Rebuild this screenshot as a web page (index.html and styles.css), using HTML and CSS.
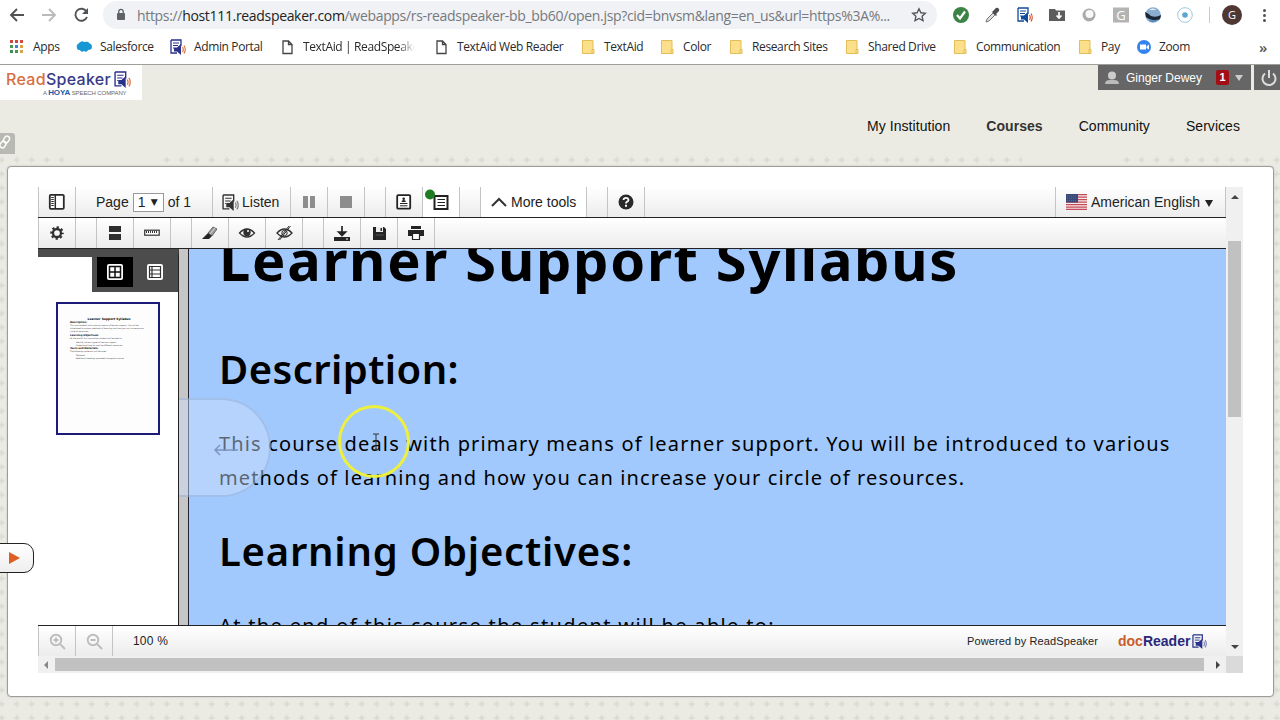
FILE: index.html
```html
<!DOCTYPE html>
<html lang="en">
<head>
<meta charset="utf-8">
<title>ReadSpeaker docReader</title>
<link rel="stylesheet" href="styles.css">
</head>
<body>
<svg class="defs" width="0" height="0">
  <defs>
    <pattern id="plus" x="9.200" y="0" width="15" height="13.950" patternUnits="userSpaceOnUse"><path d="M7.500 3l1.300 2.700L11.500 7 8.800 8.300 7.500 11 6.200 8.300 3.500 7l2.700-1.300z" fill="#dcdcd4"/></pattern>
    <symbol id="folder" viewBox="0 0 16 16"><path d="M.5 1.500h10.500v9h1v4H.5z" fill="#fcdf8a" stroke="#e3bd58"/><path d="M10 14.500v-4h1" fill="none" stroke="#e3bd58"/></symbol>
    <symbol id="file" viewBox="0 0 16 16"><path d="M1 2h5.500l3.500 3.500v9H1zM6.500 2v3.500H10" fill="#fff" stroke="#444" stroke-width="1.300"/></symbol>
    <symbol id="reader" viewBox="0 0 16 16"><path d="M1 1h10v6M1 1v13h6" fill="none" stroke="currentColor" stroke-width="1.300"/><path d="M3 4h6M3 6.500h5M3 9h1" stroke="currentColor"/><path d="M4 8.500h3L11 5v11l-4-3.500H4z" fill="currentColor"/><path d="M12.500 8q1.500 2.500 0 5M14 6.500q2.500 4 0 8" fill="none" stroke="var(--wave,#d96a35)" stroke-width="1.100"/></symbol>
  </defs>
</svg>
<header class="browser">
  <div class="address-row">
    <svg class="nav-ico" width="100" height="30" viewBox="0 0 100 30" fill="none" stroke-width="1.900"><path d="M24 15H11M17 9l-6 6 6 6" stroke="#505356"/><path d="M42 15h13M49 9l6 6-6 6" stroke="#b9bbbd"/><path d="M86.500 11.500A6 6 0 1 0 87 17" stroke="#505356"/><path d="M88 8v6h-6z" fill="#505356"/></svg>
    <div class="omnibox">
      <svg width="10" height="14" viewBox="0 0 10 14"><rect x="1" y="5" width="8" height="7" rx="1" fill="#5f6368"/><path d="M2.800 5V3.500a2.200 2.200 0 0 1 4.400 0V5" fill="none" stroke="#5f6368" stroke-width="1.300"/></svg>
      <span class="url">https://<b>host111.readspeaker.com</b>/webapps/rs-readspeaker-bb_bb60/open.jsp?cid=bnvsm&amp;lang=en_us&amp;url=https%3A%...</span>
      <svg class="star" width="16" height="16" viewBox="0 0 16 16"><path d="M8 1.800l1.900 4 4.400.5-3.200 3 .9 4.400L8 11.500l-4 2.200.900-4.400-3.200-3 4.400-.5z" fill="none" stroke="#55585c" stroke-width="1.400"/></svg>
    </div>
    <div class="extensions">
      <svg viewBox="0 0 16 16"><circle cx="8" cy="8" r="8" fill="#3c8445"/><path d="M4 8l3 3.500 5-7" fill="none" stroke="#fff" stroke-width="2.200"/></svg>
      <svg viewBox="0 0 16 16"><path d="M1 15l1-3 6-6 2 2-6 6z" fill="#ddd" stroke="#777"/><path d="M7 5l4 4 1-1-1-1 3-3q1-2-1-3-2-1-3 1L8 4z" fill="#4b4d50"/></svg>
      <svg class="rs-ext" viewBox="0 0 16 16"><use href="#reader"/></svg>
      <svg viewBox="0 0 16 16"><path d="M0 2h6l1 1.500h9V14H0z" fill="#5d5d5d"/><path d="M10 5v5M7.500 8.500L10 11l2.500-2.500" fill="none" stroke="#fff" stroke-width="1.700"/></svg>
      <svg viewBox="0 0 16 16"><circle cx="8" cy="8" r="6.500" fill="#aaa"/><circle cx="8.500" cy="7" r="4" fill="#f8f8f8"/></svg>
      <svg viewBox="0 0 16 16"><rect width="16" height="15" y=".5" fill="#b4b4b4"/><text x="8" y="12.500" text-anchor="middle" class="g-letter">G</text></svg>
      <svg viewBox="0 0 16 16"><circle cx="8" cy="8" r="7.800" fill="#8baed0"/><path d="M0 5q3 1 6 4 5 2 10-1 0 3-2 5-8 1-13-3z" fill="#1b2533"/><path d="M3 13q6 1 11-1-5 6-11 1z" fill="#5289bd"/><path d="M4 3q4-3 7 0z" fill="#e9f1f6"/></svg>
      <svg viewBox="0 0 16 16"><circle cx="8" cy="8" r="7.300" fill="#fff" stroke="#9dcbe0"/><circle cx="8" cy="8" r="2.800" fill="#5aa8cf"/></svg>
    </div>
    <i class="divider"></i>
    <span class="avatar">G</span>
    <span class="kebab"><i></i><i></i><i></i></span>
  </div>
  <nav class="bookmarks">
    <a class="apps"><svg width="16" height="16" viewBox="0 0 16 16"><path d="M0 1h3v3H0zM5 1h3v3H5zM10 1h3v3h-3z" fill="#cf4a3c"/><path d="M0 6h3v3H0z" fill="#4a9b58"/><path d="M5 6h3v3H5z" fill="#3f7fd0"/><path d="M10 6h3v3h-3z" fill="#d9a243"/><path d="M0 11h3v3H0z" fill="#3f8d4c"/><path d="M5 11h3v3H5z" fill="#449455"/><path d="M10 11h3v3h-3z" fill="#d9a243"/></svg><span>Apps</span></a>
    <a class="far"><svg width="16" height="16" viewBox="0 0 16 16"><path d="M3 4q3-3 5-1 5-1 5 1 3 1 3 4 0 3-4 3-1 3-4 1-3 2-4-1-3 0-3-2-1-3 1-4z" fill="#1798d5"/></svg><span>Salesforce</span></a>
    <a class="far"><svg class="rs" width="16" height="16"><use href="#reader"/></svg><span>Admin Portal</span></a>
    <a class="near"><svg width="16" height="16"><use href="#file"/></svg><span class="fade">TextAid | ReadSpeaker</span></a>
    <a class="near"><svg width="16" height="16"><use href="#file"/></svg><span>TextAid Web Reader</span></a>
    <a><svg width="16" height="16"><use href="#folder"/></svg><span>TextAid</span></a>
    <a><svg width="16" height="16"><use href="#folder"/></svg><span>Color</span></a>
    <a><svg width="16" height="16"><use href="#folder"/></svg><span>Research Sites</span></a>
    <a><svg width="16" height="16"><use href="#folder"/></svg><span>Shared Drive</span></a>
    <a><svg width="16" height="16"><use href="#folder"/></svg><span>Communication</span></a>
    <a><svg width="16" height="16"><use href="#folder"/></svg><span>Pay</span></a>
    <a><svg width="16" height="16" viewBox="0 0 16 16"><circle cx="7" cy="8" r="7" fill="#3384ee"/><path d="M3 5.500h6v5H3zM9.500 7.500L12 5.500v5L9.500 9z" fill="#fff"/></svg><span>Zoom</span></a>
    <span class="more">»</span>
  </nav>
</header>

<main class="page">
  <svg class="texture"><rect width="66" height="14" fill="url(#plus)"/><rect x="160" width="862" height="14" fill="url(#plus)"/><rect x="1115" width="165" height="14" fill="url(#plus)"/><rect y="14" width="100%" height="553" fill="url(#plus)"/></svg>
  <div class="masthead">
    <div class="brand">
      <div class="brand-name"><span><em>Read</em>Speaker</span><svg class="rs" width="17" height="17"><use href="#reader"/></svg></div>
      <div class="brand-sub">A <b>HOYA</b> SPEECH COMPANY</div>
    </div>
    <div class="account">
      <div class="user"><svg width="14" height="14" viewBox="0 0 14 14"><circle cx="7" cy="4.500" r="4" fill="#ccc"/><path d="M0 13q0-4 5-4h4q5 0 5 4z" fill="#bbb"/></svg><span>Ginger Dewey</span><b class="count">1</b><i class="caret"></i></div>
      <div class="power"><svg width="18" height="18" viewBox="0 0 18 18" fill="none" stroke="#ddd" stroke-width="2"><path d="M5 4.500a6.500 6.500 0 1 0 8 0M9 1v8"/></svg></div>
    </div>
    <nav class="tabs"><a>My Institution</a><a class="on">Courses</a><a>Community</a><a>Services</a></nav>
    <div class="permalink"><svg width="14" height="16" viewBox="0 0 14 16" fill="none" stroke="#fff" stroke-width="1.400"><rect x="4" y="2" width="5" height="7" rx="2.500" transform="rotate(35 6.500 5.500)"/><rect x=".5" y="7" width="5" height="7" rx="2.500" transform="rotate(35 3 10.500)"/></svg></div>
  </div>

  <section class="panel">
    <div class="reader">
      <div class="app">
        <div class="bar top">
          <div class="c37"><svg width="18" height="18" viewBox="0 0 18 18"><rect x="1.800" y="1.800" width="14" height="14" rx="1" fill="#fff" stroke="#2b2b2b" stroke-width="1.800"/><path d="M7.300 2v14" stroke="#2b2b2b" stroke-width="1.500"/><path d="M4.500 4v10" stroke="#2b2b2b" stroke-width="2.500" stroke-dasharray="1 1"/></svg></div>
          <div class="pager"><span>Page</span><span class="select">1<i>▼</i></span><span>of 1</span></div>
          <div class="listen"><svg class="dark" width="17" height="17"><use href="#reader"/></svg><span>Listen</span></div>
          <div class="c37"><svg width="14" height="14"><path d="M1 1h5v12H1zM8 1h5v12H8z" fill="#8d8d8d"/></svg></div>
          <div class="c37"><svg width="14" height="14"><path d="M1 1h12v12H1z" fill="#8d8d8d"/></svg></div>
          <div class="c21"></div>
          <div class="c37"><svg width="16" height="16" viewBox="0 0 16 16"><rect x="1.200" y="1.200" width="13" height="13.500" rx="1" fill="#fff" stroke="#222" stroke-width="1.800"/><circle cx="7.700" cy="4.700" r="1.300" fill="#222"/><path d="M5.500 8q0-2 2.200-2t2.200 2z" fill="#222"/><path d="M4 9.500h7.500M4 11.800h7.500" stroke="#222"/></svg></div>
          <div class="c37 active"><svg width="24" height="22" viewBox="0 0 24 22"><rect x="5.500" y="5" width="13" height="13" fill="#fff" stroke="#222" stroke-width="2"/><path d="M8.500 8.500h7.500M8.500 11.500h7.500M8.500 14.500h7.500" stroke="#222"/><circle cx="1" cy="3.500" r="5" fill="#207c22"/></svg></div>
          <div class="c21"></div>
          <div class="moretools"><svg width="16" height="10"><path d="M1 9l7-7 7 7" fill="none" stroke="#333" stroke-width="2"/></svg><span>More tools</span></div>
          <div class="c21"></div>
          <div class="c37"><svg width="16" height="16"><circle cx="8" cy="8" r="7.500" fill="#2a2a2a"/><path d="M5.500 6q.2-2.200 2.500-2.200T10.500 6Q10.500 7 9 7.800 8 8.400 8 9.500" fill="none" stroke="#fff" stroke-width="1.800"/><path d="M7 10.800h2v1.900H7z" fill="#fff"/></svg></div>
          <div class="fill"></div>
          <div class="lang"><svg width="21" height="16" viewBox="0 0 21 16"><path fill="#f4eaea" d="M0 0h21v16H0z"/><path d="M0 .6h21M0 3.100h21M0 5.600h21M0 8.100h21M0 10.600h21M0 13.100h21M0 15.400h21" stroke="#c64b59" stroke-width="1.200"/><path fill="#3a4977" d="M0 0h12v8.500H0z"/><path d="M1 2h10M1 4.200h10M1 6.500h10" stroke="#66749b" stroke-width=".7" stroke-dasharray="1 1"/></svg><span>American English</span><i></i></div>
        </div>
        <div class="bar second">
          <div class="c37"><svg width="14" height="14" viewBox="0 0 14 14"><circle cx="7" cy="7" r="4" fill="none" stroke="#303030" stroke-width="2.300"/><circle cx="7" cy="7" r="5.800" fill="none" stroke="#303030" stroke-width="2" stroke-dasharray="2.300 2.255" stroke-dashoffset="1.100"/></svg></div>
          <div class="c21"></div>
          <div class="c37"><svg width="12" height="14"><path d="M0 0h12v6H0zM0 8h12v6H0z" fill="#2e2e2e"/></svg></div>
          <div class="c37"><svg width="16" height="8"><rect x=".7" y="1.200" width="14.500" height="5" fill="#fff" stroke="#333" stroke-width="1.200"/><path d="M2 3h12" stroke="#333" stroke-width="2" stroke-dasharray="1 1"/></svg></div>
          <div class="c21"></div>
          <div class="c37"><svg width="16" height="14" viewBox="0 0 16 14"><path d="M6 7l5-6 4 2-5 7z" fill="#999" stroke="#444" stroke-width=".7"/><path d="M8 8l5-6" stroke="#ddd"/><path d="M0 13l6-6 4 3-3 3H3z" fill="#262626"/></svg></div>
          <div class="c37"><svg width="16" height="12" viewBox="0 0 16 12"><path d="M.5 6Q8-2 15.500 6 8 14 .5 6z" fill="#fff" stroke="#303030" stroke-width="1.300"/><circle cx="8" cy="5.500" r="3.700" fill="#303030"/><circle cx="9" cy="4" r="1" fill="#fff"/></svg></div>
          <div class="c37"><svg width="17" height="14" viewBox="0 0 17 14"><path d="M1 7Q8.500-1 16 7 8.500 15 1 7z" fill="none" stroke="#303030" stroke-width="1.300"/><circle cx="8.500" cy="7" r="2.700" fill="none" stroke="#303030"/><path d="M14.500 0L3.500 14M13 0L2 14" stroke="#303030"/></svg></div>
          <div class="c21"></div>
          <div class="c37"><svg width="16" height="15"><path d="M8 0v8M4.500 6L8 9.500 11.500 6z" stroke="#242424" stroke-width="1.700" fill="#242424"/><path d="M0 11h16v4H0z" fill="#242424"/><path d="M12 13h2" stroke="#fff"/></svg></div>
          <div class="c37"><svg width="13" height="13"><path d="M0 0h11l2 2v11H0z" fill="#242424"/><path d="M3 0h7v5H3z" fill="#eee"/><path d="M7.500 1h1.500v3H7.500z" fill="#242424"/><path d="M2.500 8h8" stroke="#555"/></svg></div>
          <div class="c37"><svg width="16" height="14"><path d="M3 0h10v3H3zM0 4h16v6H0z" fill="#242424"/><path d="M4.500 7.500h7v6h-7z" fill="#fff" stroke="#242424" stroke-width="1.200"/></svg></div>
          <div class="fill"></div>
        </div>
        <div class="work">
          <aside class="side">
            <div class="side-tabs">
              <div class="sel"><svg width="16" height="16"><rect width="16" height="16" rx="2" fill="#fff"/><path d="M2.500 2.500h11v11h-11zM8 2v12M2 8h12" fill="none" stroke="#111" stroke-width="1.500"/></svg></div>
              <div><svg width="16" height="16"><rect width="16" height="16" rx="2" fill="#fff"/><path d="M2.500 2.500h11v11h-11zM2 6h12M2 10h12M5 2v12" fill="none" stroke="#333" stroke-width="1.200"/></svg></div>
            </div>
            <div class="thumb">
              <h6>Learner Support Syllabus</h6>
              <b>Description:</b><p>This course deals with primary means of learner support. You will be introduced to various methods of learning and how you can increase your circle of resources.</p>
              <b>Learning Objectives:</b><p>At the end of this course the student will be able to:</p>
              <p class="in">Identify various types of learner support</p><p class="in">Understand how to use the different resources</p>
              <b>Texts and Materials:</b><p>The following materials will be used:</p>
              <p class="in">Textbook</p><p class="in">Additional readings provided throughout course</p>
            </div>
          </aside>
          <div class="gutter"></div>
          <article class="doc">
            <h1><span class="t1">Learner Support Syllabus</span></h1>
            <h2 class="h-desc"><span class="t2">Description:</span></h2>
            <p><span class="l1">This course deals with primary means of learner support. You will be introduced to various</span><br><span class="l2">methods of learning and how you can increase your circle of resources.</span></p>
            <h2 class="h-obj"><span class="t3">Learning Objectives:</span></h2>
            <p class="last"><span class="l3">At the end of this course the student will be able to:</span></p>
            <div class="halo"><svg width="8" height="18"><path d="M1 1h2.500q.5 0 .5 1 0-1 .5-1H7M4 2v13M1 16.500h2.500Q4 16 4 15q0 1.500.500 1.500H7" fill="none" stroke="#333"/></svg></div>
          </article>
          <div class="back"><svg width="26" height="12"><path d="M25 6H2M7 1L2 6l5 5" fill="none" stroke="#7994bd" stroke-width="1.400"/></svg></div>
        </div>
        <div class="bar foot">
          <div class="c37"><svg width="17" height="17" fill="none" stroke="#bdbdbd" stroke-width="1.900"><circle cx="7" cy="7" r="5.300"/><path d="M11 11l5 5M4.500 7h5M7 4.500v5"/></svg></div>
          <div class="c37"><svg width="17" height="17" fill="none" stroke="#bdbdbd" stroke-width="1.900"><circle cx="7" cy="7" r="5.300"/><path d="M11 11l5 5M4.500 7h5"/></svg></div>
          <div class="zoomlevel"><span>100 %</span></div>
          <div class="powered"><span>Powered by ReadSpeaker</span></div>
          <div class="product"><span><em>doc</em>Reader</span><svg class="rs" width="15" height="15"><use href="#reader"/></svg></div>
        </div>
      </div>
      <div class="vscroll"><i class="up"></i><div class="vthumb"></div><i class="down"></i></div>
      <div class="hscroll"><i class="left"></i><div class="hthumb"></div><i class="right"></i></div>
      <div class="corner"></div>
    </div>
  </section>
  <div class="drawer"><i></i></div>
</main>
</body>
</html>
```
FILE: styles.css
```css
* { box-sizing: border-box; }
body { margin: 0; width: 1280px; height: 720px; overflow: hidden; background: #ebebe3; font-family: "Liberation Sans", Arial, sans-serif; color: #111; }
svg { display: block; flex: none; overflow: visible; }
.defs { position: absolute; }
em { font-style: normal; }
.rs { color: #29318a; }
.rs-ext { color: #124a9c; --wave: #d2492a; }
.dark { color: #333; --wave: #777; }

.browser { height: 65px; background: #fff; border-bottom: 1px solid #a09f9a; font-family: "Open Sans", "Noto Sans", sans-serif; }
.address-row { height: 30px; display: flex; align-items: center; }
.nav-ico { margin-right: 3px; }
.omnibox { width: 834px; height: 28px; border-radius: 14px; background: #f0f2f5; display: flex; align-items: center; padding: 0 10px 0 13px; flex: none; }
.url { margin-left: 11px; font-size: 14px; letter-spacing: -.325px; color: #76797d; white-space: nowrap; flex: 1; }
.url b { font-weight: 400; color: #222; }
.extensions { display: flex; margin-left: 8px; }
.extensions svg { width: 16px; height: 16px; margin: 0 8px; }
.g-letter { font-size: 13px; fill: #fff; }
.divider { width: 1px; height: 16px; background: #c8cacc; margin-left: 8px; }
.avatar { width: 20px; height: 20px; border-radius: 50%; background: #4f3833; color: #fff; font-size: 11px; line-height: 20px; text-align: center; margin-left: 12px; }
.kebab { display: grid; gap: 2px; margin-left: 21px; }
.kebab i { width: 3px; height: 3px; border-radius: 50%; background: #505356; }
.bookmarks { height: 33px; padding-left: 10px; display: grid; grid-template-columns: 66px 94px 112px 154px 146px 79px 69px 116px 108px 125px 58px 122px auto; align-items: center; font-size: 12px; letter-spacing: -.37px; color: #2a2a2a; white-space: nowrap; }
.bookmarks a { display: flex; align-items: center; gap: 6px; }
.bookmarks .apps { gap: 7px; }
.bookmarks .near { gap: 5px; }
.bookmarks .far { gap: 8px; }
.fade { width: 112px; overflow: hidden; mask-image: linear-gradient(90deg, #000 85%, transparent); }
.more { font-size: 15px; font-weight: 600; color: #555; }

.page { position: relative; height: 655px; }
.texture { position: absolute; inset: 88px 0 0; width: 100%; height: 567px; }
.masthead { height: 102px; position: relative; }
.brand { position: absolute; left: 0; top: 0; width: 142px; height: 35px; background: #fff; padding: 4px 0 0 6px; }
.brand-name { display: flex; align-items: center; gap: 3px; height: 20px; font: 500 16px Inter, sans-serif; letter-spacing: .3px; color: #363a87; }
.brand-name em { color: #d6703f; }
.brand-sub { font-size: 6px; line-height: 8px; letter-spacing: -.1px; color: #666; padding-left: 37px; white-space: nowrap; }
.brand-sub b { font-size: 8px; color: #1c5ca8; }
.account { display: flex; gap: 3px; justify-content: flex-end; height: 25px; font-size: 12px; color: #fff; }
.user { width: 153px; background: #666; display: flex; align-items: center; padding-left: 7px; }
.user span { margin-left: 7px; width: 90px; white-space: nowrap; }
.count { width: 13px; height: 15px; background: #a30d14; border-radius: 2px; font-size: 11px; line-height: 15px; text-align: center; }
.caret { border: 4.500px solid transparent; border-top: 6px solid #ccc; border-bottom: 0; margin-left: 6px; }
.power { width: 26px; background: #666; display: flex; align-items: center; padding-left: 6px; }
.tabs { display: flex; justify-content: flex-end; gap: 36px; padding: 28px 40px 0 0; font-size: 14px; line-height: 16px; letter-spacing: .05px; }
.tabs .on { font-weight: 700; color: #333; }
.permalink { position: absolute; left: 0; top: 68px; width: 15px; height: 21px; background: #b9b9b4; border-radius: 0 3px 0 0; padding: 1px 0; }

.panel { position: relative; margin: -1px 6px 0 7px; height: 531px; background: #fff; border: 1px solid #9c9c98; border-radius: 4px; padding: 20px 0 0 30px; box-shadow: 0 0 2px #bbb; }
.reader { width: 1205px; height: 486px; display: grid; grid-template: 469px 17px / 1188px 17px; }
.app { display: flex; flex-direction: column; }
.bar { height: 31px; flex: none; display: flex; border-bottom: 1px solid #222; background: linear-gradient(#fff, #ececec); font-size: 14px; color: #222; }
.bar > div { border-left: 1px solid #c4c4c4; display: flex; align-items: center; flex: none; white-space: nowrap; }
.bar .c37 { width: 37px; justify-content: center; }
.bar .c21 { width: 21px; }
.bar .fill { flex: 1; }
.bar .active, .bar .moretools { background: #fff; }
.pager { width: 137px; padding-left: 20px; }
.select { width: 31px; height: 19px; border: 1px solid #999; background: #fff; margin: 0 4px; padding-left: 4px; line-height: 17px; display: flex; justify-content: space-between; }
.select i { font: 9px/17px "DejaVu Sans", sans-serif; padding-right: 5px; }
.listen { width: 78px; padding-left: 9px; gap: 3px; }
.moretools { width: 106px; padding-left: 10px; gap: 4px; }
.lang { width: 171px; padding-left: 10px; gap: 4px; border-right: 1px solid #c4c4c4; }
.lang i { border: 4px solid transparent; border-top: 7px solid #222; border-bottom: 0; margin: 2px 0 0 1px; }

.work { position: relative; height: 376px; display: flex; }
.side { width: 141px; border-top: 8px solid #4c4c4c; border-right: 1px solid #222; background: #fff; }
.side-tabs { height: 35px; width: 86px; margin-left: 54px; background: #4c4c4c; display: flex; padding: 0 5px; gap: 4px; }
.side-tabs div { width: 36px; height: 30px; display: grid; place-items: center; }
.side-tabs .sel { background: #000; }
.thumb { width: 104px; height: 133px; margin: 10px 0 0 18px; border: 2px solid #1b1b7a; padding: 14px 10px 0 12px; font: 2px/3px "DejaVu Sans", sans-serif; color: #333; background: #fdfdfd; }
.thumb h6 { margin: 0; font-size: 3px; line-height: 3px; text-align: center; color: #000; }
.thumb b { display: block; font-size: 2.500px; color: #000; }
.thumb p { margin: 0 0 1px; }
.thumb .in { margin: 0 0 0 6px; }
.gutter { width: 10px; background: #c6c6c6; border-right: 1px solid #223; }
.doc { position: relative; flex: 1; overflow: hidden; background: #a2c9fd; padding-left: 30px; font-family: "Noto Sans", sans-serif; color: #000; white-space: nowrap; }
.doc h1 { margin: -24px 0 0; font-size: 56px; line-height: 68px; font-weight: 700; }
.doc h2 { margin: 0; font-size: 40px; line-height: 50px; font-weight: 600; }
.doc .h-desc { margin-top: 51px; }
.doc p { margin: 33px 0 0; font-size: 20px; line-height: 34px; font-weight: 400; }
.doc .h-obj { margin-top: 31px; }
.t1 { letter-spacing: 1.700px; }
.t2 { letter-spacing: .42px; }
.t3 { letter-spacing: .77px; }
.l1 { letter-spacing: 1.150px; }
.l2 { letter-spacing: 1.130px; }
.l3 { letter-spacing: 1.350px; }
.back { position: absolute; left: 141px; top: 149px; width: 92px; height: 99px; border: 2px solid rgba(100,130,180,.25); border-left: 0; border-radius: 0 50px 50px 0; background: rgba(205,224,250,.45); padding: 44px 0 0 34px; }
.halo { position: absolute; left: 149px; top: 156px; width: 72px; height: 73px; border: 3px solid #edf03c; border-radius: 50%; padding: 25px 0 0 31px; }

.foot { height: 31px; border: 0; border-top: 1px solid #222; }
.foot .zoomlevel { padding-left: 20px; font-size: 12px; letter-spacing: .2px; flex: 1; }
.bar .powered, .bar .product { border: 0; }
.powered { font-size: 11px; letter-spacing: .12px; width: 151px; }
.product { width: 108px; font-size: 14px; font-weight: 700; color: #29287b; gap: 2px; --wave: #6d78b4; }
.product em { color: #c95d2c; }

.vscroll { background: #f0f0f0; display: flex; flex-direction: column; align-items: center; }
.vthumb { width: 13px; height: 176px; background: #c1c1c1; margin-top: 42px; }
.up { border: 4px solid transparent; border-top: 0; border-bottom: 4px solid #444; margin-top: 8px; }
.down { border: 4px solid transparent; border-bottom: 0; border-top: 4px solid #444; margin: auto 0 7px; }
.hscroll { background: #f0f0f0; display: flex; align-items: center; }
.left { border: 4px solid transparent; border-left: 0; border-right: 4px solid #888; margin-left: 6px; }
.hthumb { width: 1149px; height: 13px; background: #c1c1c1; margin-left: 7px; }
.right { border: 4px solid transparent; border-right: 0; border-left: 4px solid #444; margin-left: 12px; }
.corner { background: #dadada; }
.drawer { position: absolute; left: -2px; top: 478px; width: 36px; height: 30px; border: 1px solid #222; border-radius: 0 10px 10px 0; background: linear-gradient(#fff, #eee); padding: 8px 0 0 10px; }
.drawer i { display: block; width: 0; border: 6px solid transparent; border-left: 11px solid #dd5d22; border-right: 0; }
```
